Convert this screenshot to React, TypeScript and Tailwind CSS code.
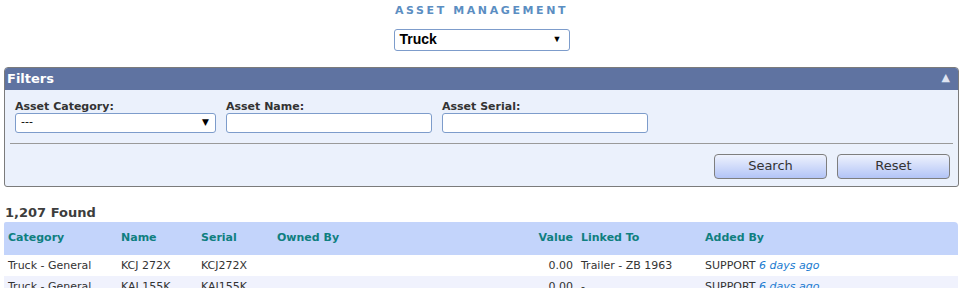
const rows = [
  { category: 'Truck - General', name: 'KCJ 272X', serial: 'KCJ272X', owner: '', value: '0.00', linked: 'Trailer - ZB 1963', by: 'SUPPORT', when: '6 days ago' },
  { category: 'Truck - General', name: 'KAJ 155K', serial: 'KAJ155K', owner: '', value: '0.00', linked: '-', by: 'SUPPORT', when: '6 days ago' },
]

function Caret() {
  return <span className="text-[9px] leading-none text-black">▼</span>
}

export default function App() {
  return (
    <div className="h-[288px] overflow-hidden bg-white pl-[4px] pr-[6px] font-['DejaVu_Sans',Verdana,sans-serif] text-[11px] text-[#333]">
      <div className="pt-[3px] text-center text-[11px] font-bold tracking-[2.6px] text-[#5b8ec2]">ASSET MANAGEMENT</div>

      <div className="mt-[9px] flex justify-center">
        <div className="flex h-[22px] w-[176px] items-center justify-between rounded-[3px] border border-[#7d9ccb] bg-white pr-[7px] pl-[5px] font-['Liberation_Sans',Arial,sans-serif] text-[14px] font-bold text-black">
          <span>Truck</span>
          <Caret />
        </div>
      </div>

      <div className="mt-[16px] overflow-hidden rounded-t-[4px] rounded-b-[3px] border border-[#7b7b7b] bg-[#ebf1fc]">
        <div className="flex h-[22px] items-center justify-between bg-[#5f73a1] pl-[2px] pr-[8px] text-[13px] font-bold text-white">
          <span>Filters</span>
          <span className="text-[11px] text-[#dfe4f2]">▲</span>
        </div>

        <div className="px-[5px]">
          <div className="flex gap-[10px] pt-[11px] pl-[5px]">
            <div className="flex w-[201px] flex-col">
              <label className="text-[11px] font-bold leading-[12px] text-[#333]">Asset Category:</label>
              <div className="flex h-[20px] items-center justify-between rounded-[3px] border border-[#7d9ccb] bg-white pl-[5px] pr-[6px] text-[11px] text-black">
                <span>---</span>
                <Caret />
              </div>
            </div>
            <div className="flex w-[206px] flex-col">
              <label className="text-[11px] font-bold leading-[12px] text-[#333]">Asset Name:</label>
              <div className="h-[20px] rounded-[3px] border border-[#7d9ccb] bg-white" />
            </div>
            <div className="flex w-[206px] flex-col">
              <label className="text-[11px] font-bold leading-[12px] text-[#333]">Asset Serial:</label>
              <div className="h-[20px] rounded-[3px] border border-[#7d9ccb] bg-white" />
            </div>
          </div>

          <div className="mt-[10px] border-t border-[#9a9a9a]" />

          <div className="flex justify-end gap-[10px] pt-[10px] pb-[7px] pr-[3px]">
            <button className="h-[25px] w-[113px] rounded-[4px] border border-[#7e7e7e] bg-gradient-to-b from-[#eef2fd] to-[#b3c4f6] text-[13px] text-[#333]">Search</button>
            <button className="h-[25px] w-[113px] rounded-[4px] border border-[#7e7e7e] bg-gradient-to-b from-[#eef2fd] to-[#b3c4f6] text-[13px] text-[#333]">Reset</button>
          </div>
        </div>
      </div>

      <div className="mt-[18px] pl-[1px] text-[13px] font-bold leading-[16px] text-[#3d3d3d]">1,207 Found</div>

      <table className="mt-[1px] w-[954px] border-collapse text-[11px]">
        <thead>
          <tr className="h-[33px] bg-[#c3d4fb] text-left font-bold text-[#0f7f80]">
            <th className="w-[117px] rounded-tl-[2px] pl-[4px] pt-[1px] font-bold">Category</th>
            <th className="w-[80px] pt-[1px] font-bold">Name</th>
            <th className="w-[76px] pt-[1px] font-bold">Serial</th>
            <th className="pt-[1px] font-bold">Owned By</th>
            <th className="w-[80px] pr-[8px] pt-[1px] text-right font-bold">Value</th>
            <th className="w-[124px] pt-[1px] font-bold">Linked To</th>
            <th className="w-[253px] rounded-tr-[4px] pt-[1px] font-bold">Added By</th>
          </tr>
        </thead>
        <tbody>
          {rows.map((r, i) => (
            <tr key={r.name} className={`h-[21px] ${i % 2 === 1 ? 'bg-[#f0f2fd]' : 'bg-white'} text-[#333]`}>
              <td className="pl-[4px] pt-[2px]">{r.category}</td>
              <td className="pt-[2px]">{r.name}</td>
              <td className="pt-[2px]">{r.serial}</td>
              <td className="pt-[2px]">{r.owner}</td>
              <td className="pr-[8px] pt-[2px] text-right">{r.value}</td>
              <td className="pt-[2px]">{r.linked}</td>
              <td className="pt-[2px]">
                {r.by} <span className="italic text-[#1a7bd0]">{r.when}</span>
              </td>
            </tr>
          ))}
        </tbody>
      </table>
    </div>
  )
}
